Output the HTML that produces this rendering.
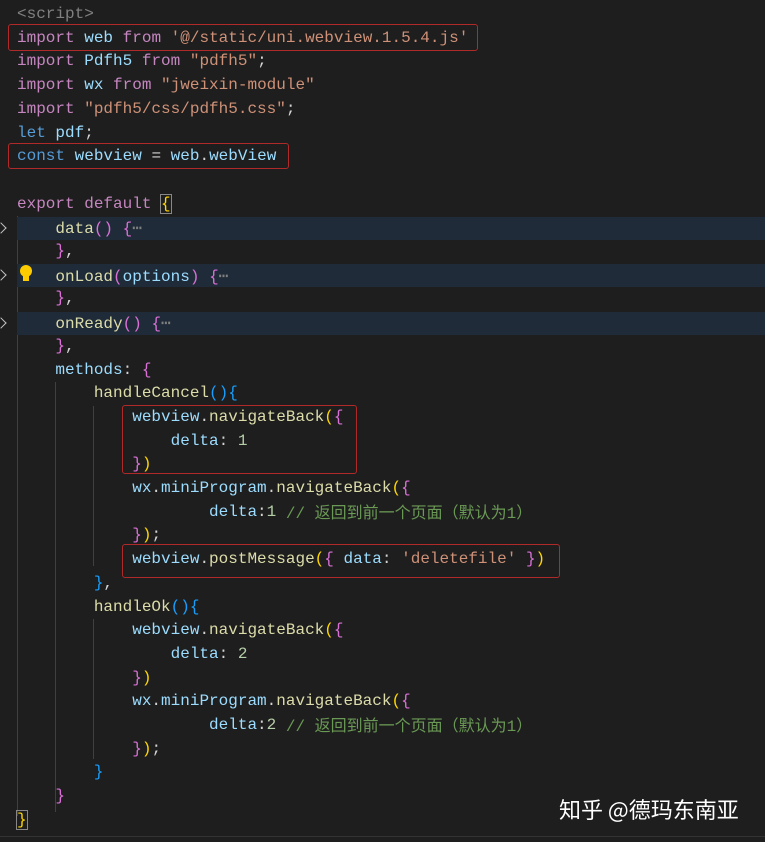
<!DOCTYPE html><html><head><meta charset="utf-8"><style>
body{margin:0;width:765px;height:842px;background:#1e1e1e;overflow:hidden;position:relative}
.l{position:absolute;left:17px;height:23.7px;line-height:23.7px;font:16px "Liberation Mono",monospace;white-space:pre;color:#d4d4d4;margin-top:3px}
.cj{display:inline-block;vertical-align:top;height:23.7px;line-height:23.7px;overflow:hidden;font-family:"Liberation Mono","Noto Sans CJK SC",monospace}
.hl{position:absolute;left:17px;width:748px;height:23px;background:#1f2b38}
.k{color:#c586c0}.v{color:#9cdcfe}.c{color:#569cd6}.s{color:#ce9178}.f{color:#dcdcaa}.g{color:#6a9955}.n{color:#b5cea8}.y{color:#ffd700}.p{color:#da70d6}.b{color:#179fff}.gr{color:#808080}
.box{position:absolute;border:1.5px solid #b02a2a;border-radius:3px}
.chev{position:absolute;left:-3px;width:7px;height:7px;border-right:1.5px solid #c5c5c5;border-top:1.5px solid #c5c5c5;transform:rotate(45deg)}
.gd{position:absolute;width:1px;background:#404040}
</style></head><body>
<div class="gd" style="left:17px;top:216px;height:600px"></div>
<div class="gd" style="left:55px;top:382px;height:430px"></div>
<div class="gd" style="left:93px;top:406px;height:160px"></div>
<div class="gd" style="left:93px;top:619px;height:140px"></div>
<div class="hl" style="top:217px"></div><div class="hl" style="top:264px"></div><div class="hl" style="top:312px"></div>
<div class="chev" style="top:224px"></div><div class="chev" style="top:271px"></div><div class="chev" style="top:319px"></div>
<div style="position:absolute;left:20px;top:265px;width:12px;height:12px;border-radius:50%;background:#ffcc00"></div>
<div style="position:absolute;left:23px;top:276px;width:6px;height:5px;background:#ffcc00"></div>
<div class="l gr" style="top:2px">&lt;script&gt;</div>
<div class="l" style="top:25.7px"><span class="k">import</span> <span class="v">web</span> <span class="k">from</span> <span class="s">'@/static/uni.webview.1.5.4.js'</span></div>
<div class="l" style="top:49.4px"><span class="k">import</span> <span class="v">Pdfh5</span> <span class="k">from</span> <span class="s">"pdfh5"</span>;</div>
<div class="l" style="top:73.1px"><span class="k">import</span> <span class="v">wx</span> <span class="k">from</span> <span class="s">"jweixin-module"</span></div>
<div class="l" style="top:96.8px"><span class="k">import</span> <span class="s">"pdfh5/css/pdfh5.css"</span>;</div>
<div class="l" style="top:120.5px"><span class="c">let</span> <span class="v">pdf</span>;</div>
<div class="l" style="top:144.2px"><span class="c">const</span> <span class="v">webview</span> = <span class="v">web</span>.<span class="v">webView</span></div>
<div class="l" style="top:191.6px"><span class="k">export</span> <span class="k">default</span> <span class="y" style="outline:1px solid #888">{</span></div>
<div class="l" style="top:215.3px">    <span class="f">data</span><span class="p">()</span> <span class="p">{</span><span class="gr">⋯</span></div>
<div class="l" style="top:239px">    <span class="p">}</span>,</div>
<div class="l" style="top:262.7px">    <span class="f">onLoad</span><span class="p">(</span><span class="v">options</span><span class="p">)</span> <span class="p">{</span><span class="gr">⋯</span></div>
<div class="l" style="top:286.4px">    <span class="p">}</span>,</div>
<div class="l" style="top:310.1px">    <span class="f">onReady</span><span class="p">()</span> <span class="p">{</span><span class="gr">⋯</span></div>
<div class="l" style="top:333.8px">    <span class="p">}</span>,</div>
<div class="l" style="top:357.5px">    <span class="v">methods</span>: <span class="p">{</span></div>
<div class="l" style="top:381.2px">        <span class="f">handleCancel</span><span class="b">(){</span></div>
<div class="l" style="top:404.9px">            <span class="v">webview</span>.<span class="f">navigateBack</span><span class="y">(</span><span class="p">{</span></div>
<div class="l" style="top:428.6px">                <span class="v">delta</span>: <span class="n">1</span></div>
<div class="l" style="top:452.3px">            <span class="p">}</span><span class="y">)</span></div>
<div class="l" style="top:476px">            <span class="v">wx</span>.<span class="v">miniProgram</span>.<span class="f">navigateBack</span><span class="y">(</span><span class="p">{</span></div>
<div class="l" style="top:499.7px">                    <span class="v">delta</span>:<span class="n">1</span> <span class="g cj">// 返回到前一个页面（默认为1）</span></div>
<div class="l" style="top:523.4px">            <span class="p">}</span><span class="y">)</span>;</div>
<div class="l" style="top:547.1px">            <span class="v">webview</span>.<span class="f">postMessage</span><span class="y">(</span><span class="p">{</span> <span class="v">data</span>: <span class="s">'deletefile'</span> <span class="p">}</span><span class="y">)</span></div>
<div class="l" style="top:570.8px">        <span class="b">}</span>,</div>
<div class="l" style="top:594.5px">        <span class="f">handleOk</span><span class="b">(){</span></div>
<div class="l" style="top:618.2px">            <span class="v">webview</span>.<span class="f">navigateBack</span><span class="y">(</span><span class="p">{</span></div>
<div class="l" style="top:641.9px">                <span class="v">delta</span>: <span class="n">2</span></div>
<div class="l" style="top:665.6px">            <span class="p">}</span><span class="y">)</span></div>
<div class="l" style="top:689.3px">            <span class="v">wx</span>.<span class="v">miniProgram</span>.<span class="f">navigateBack</span><span class="y">(</span><span class="p">{</span></div>
<div class="l" style="top:713px">                    <span class="v">delta</span>:<span class="n">2</span> <span class="g cj">// 返回到前一个页面（默认为1）</span></div>
<div class="l" style="top:736.7px">            <span class="p">}</span><span class="y">)</span>;</div>
<div class="l" style="top:760.4px">        <span class="b">}</span></div>
<div class="l" style="top:784.1px">    <span class="p">}</span></div>
<div class="l" style="top:807.8px"><span class="y" style="outline:1px solid #888">}</span></div>
<div class="box" style="left:8px;top:24px;width:468px;height:25px"></div>
<div class="box" style="left:8px;top:143px;width:279px;height:24px"></div>
<div class="box" style="left:122px;top:405px;width:233px;height:67px"></div>
<div class="box" style="left:122px;top:544px;width:436px;height:32px"></div>
<div style="position:absolute;left:559px;top:793px;font:22px 'Noto Sans CJK SC',sans-serif;color:#fff;white-space:nowrap">知乎 @德玛东南亚</div>
<div style="position:absolute;left:0;top:836px;width:765px;height:1px;background:#333"></div>
</body></html>
